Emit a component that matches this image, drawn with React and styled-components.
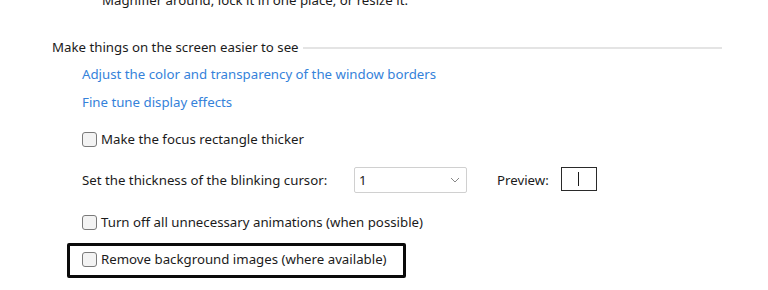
import React from "react";
import styled, { createGlobalStyle } from "styled-components";

const GlobalStyle = createGlobalStyle`
  html, body {
    margin: 0;
    padding: 0;
    background: #ffffff;
  }
  body {
    font-family: "Noto Sans", "Open Sans", sans-serif;
    font-size: 13.25px;
    color: #1b1b1b;
    overflow: hidden;
  }
`;

const Page = styled.div`
  width: 670px;
  height: 290px;
  padding-left: 52px;
  display: flex;
  flex-direction: column;
`;

const Overflow = styled.div`
  margin-top: -10px;
  margin-left: 50px;
  line-height: 20px;
`;

const SectionHeader = styled.div`
  display: flex;
  align-items: center;
  gap: 4px;
  margin-top: 27px;
  line-height: 20px;
`;

const Rule = styled.div`
  flex: 1;
  height: 2px;
  background: #e4e4e4;
  margin-top: 1px;
`;

const Body = styled.div`
  padding-left: 30px;
  display: flex;
  flex-direction: column;
`;

const Link = styled.a`
  color: #3582da;
  text-decoration: none;
  line-height: 20px;
  margin-top: ${(p) => p.$gap}px;
  width: fit-content;
  cursor: pointer;
`;

const CheckRow = styled.label`
  display: flex;
  align-items: center;
  gap: 4px;
  line-height: 20px;
  height: 20px;
  margin-top: ${(p) => p.$gap || 0}px;
`;

const Box = styled.span`
  width: 13px;
  height: 13px;
  border: 1px solid #7a7a7a;
  border-radius: 3px;
  background: #f3f3f3;
  flex-shrink: 0;
`;

const SettingRow = styled.div`
  display: flex;
  align-items: center;
  margin-top: 18px;
  height: 26px;
`;

const SettingLabel = styled.span`
  width: 272px;
`;

const Select = styled.div`
  width: 101px;
  height: 24px;
  border: 1px solid #d0d0d0;
  border-radius: 2px;
  display: flex;
  align-items: center;
  justify-content: space-between;
  padding: 0 6px 0 4px;
  box-sizing: content-box;
  margin-right: 30px;
  color: #1b1b1b;
`;

const PreviewLabel = styled.span`
  margin-right: 12px;
`;

const PreviewBox = styled.div`
  width: 34px;
  height: 22px;
  border: 1px solid #2a2a2a;
  display: flex;
  justify-content: center;
  align-items: center;
  margin-top: -2px;
`;

const Caret = styled.div`
  width: 1px;
  height: 14px;
  background: #1b1b1b;
`;

const Highlight = styled.div`
  margin-left: -15px;
  margin-top: 11px;
  width: fit-content;
  border: 3px solid #0a0a0a;
  border-radius: 2px;
  padding: 3px 16px 6px 12px;
`;

function Check({ label, gap }) {
  return (
    <CheckRow $gap={gap}>
      <Box />
      <span>{label}</span>
    </CheckRow>
  );
}

export default function App() {
  return (
    <>
      <GlobalStyle />
      <Page>
        <Overflow>Magnifier around, lock it in one place, or resize it.</Overflow>
        <SectionHeader>
          <span>Make things on the screen easier to see</span>
          <Rule />
        </SectionHeader>
        <Body>
          <Link $gap={7}>Adjust the color and transparency of the window borders</Link>
          <Link $gap={8}>Fine tune display effects</Link>
          <Check label="Make the focus rectangle thicker" gap={17} />
          <SettingRow>
            <SettingLabel>Set the thickness of the blinking cursor:</SettingLabel>
            <Select>
              <span>1</span>
              <svg width="10" height="6" viewBox="0 0 10 6">
                <path d="M1 1l4 4 4-4" fill="none" stroke="#888" strokeWidth="1" />
              </svg>
            </Select>
            <PreviewLabel>Preview:</PreviewLabel>
            <PreviewBox>
              <Caret />
            </PreviewBox>
          </SettingRow>
          <Check label="Turn off all unnecessary animations (when possible)" gap={19} />
          <Highlight>
            <Check label="Remove background images (where available)" />
          </Highlight>
        </Body>
      </Page>
    </>
  );
}
